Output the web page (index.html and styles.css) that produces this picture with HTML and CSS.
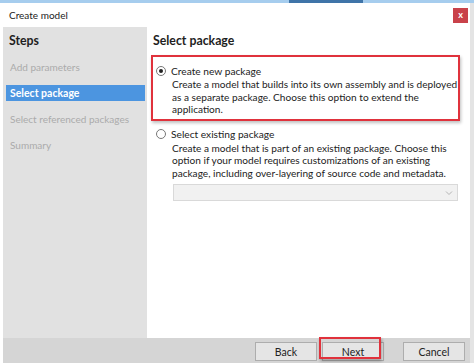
FILE: index.html
```html
<!DOCTYPE html>
<html lang="en">
<head>
  <meta charset="UTF-8">
  <title>Create model</title>
  <link rel="stylesheet" href="styles.css">
</head>
<body>
  <div class="window">
    <div class="topstrip"><span class="seg"></span></div>
    <div class="titlebar">
      <span class="title">Create model</span>
      <span class="close">x</span>
    </div>
    <div class="content">
      <div class="sidebar">
        <h2>Steps</h2>
        <ul class="steps">
          <li>Add parameters</li>
          <li class="active">Select package</li>
          <li>Select referenced packages</li>
          <li>Summary</li>
        </ul>
      </div>
      <div class="main">
        <h2>Select package</h2>
        <div class="option marked">
          <div class="label"><span class="radio checked"></span>Create new package</div>
          <p>Create a model that builds into its own assembly and is deployed<br>as a separate package. Choose this option to extend the<br>application.</p>
        </div>
        <div class="option">
          <div class="label"><span class="radio"></span>Select existing package</div>
          <p>Create a model that is part of an existing package. Choose this<br>option if your model requires customizations of an existing<br>package, including over-layering of source code and metadata.</p>
          <div class="select">
            <svg width="8" height="6" viewBox="0 0 8 6"><path d="M1 1.5 L4 4.5 L7 1.5" fill="none" stroke="#b5b5b5" stroke-width="1"/></svg>
          </div>
        </div>
      </div>
    </div>
    <div class="footer">
      <button>Back</button>
      <button class="next">Next</button>
      <button class="cancel">Cancel</button>
    </div>
  </div>
</body>
</html>
```

FILE: styles.css
```css
body {
  margin: 0;
  padding: 0;
  background: #fff;
  font-family: 'Lato', 'Open Sans', sans-serif;
  color: #222;
}

.window {
  width: 474px;
  height: 363px;
  display: flex;
  flex-direction: column;
  overflow: hidden;
}

.topstrip {
  height: 3px;
  background: #a6cdee;
  display: flex;
}

.topstrip .seg {
  margin-left: 289px;
  width: 74px;
  background: #3f74a8;
}

.titlebar {
  height: 24px;
  display: flex;
  align-items: center;
  justify-content: space-between;
  padding: 0 2px 0 9px;
  border-right: 4px solid #e4e4e4;
}

.title {
  font-size: 10px;
  color: #222;
}

.close {
  width: 15px;
  height: 15px;
  background: #c9424a;
  color: #fff;
  font-size: 9px;
  font-weight: bold;
  line-height: 14px;
  text-align: center;
}

.content {
  flex: 1;
  display: flex;
  margin-left: 3px;
  border-right: 4px solid #e4e4e4;
  min-height: 0;
}

.sidebar {
  flex: 0 0 144px;
  background: #e1e1e1;
  padding: 5px 2px 0 3px;
  box-sizing: border-box;
}

h2 {
  margin: 0;
  font-size: 12.3px;
  font-weight: bold;
  color: #1e1e1e;
  height: 17px;
  line-height: 17px;
}

.sidebar h2 {
  padding-left: 3px;
}

.steps {
  list-style: none;
  margin: 10px 0 0 0;
  padding: 0;
}

.steps li {
  font-size: 10px;
  color: #ababab;
  height: 16px;
  line-height: 16px;
  padding-left: 4px;
  margin-bottom: 10px;
  white-space: nowrap;
}

.steps li.active {
  background: #4c95e0;
  color: #fff;
  font-size: 10.5px;
  font-weight: bold;
}

.main {
  flex: 1;
  min-width: 0;
  background: #fff;
  padding: 5px 10px 0 3px;
}

.main h2 {
  padding-left: 3px;
}

.option {
  margin-left: 1px;
  padding: 6px 0 4px 5px;
}

.option.marked {
  margin-top: 6px;
  border: 2px solid #e0323c;
  box-shadow: 1px 2px 3px rgba(0, 0, 0, 0.25);
  padding: 6px 0 3px 3px;
}

.label {
  display: flex;
  align-items: center;
  font-size: 10.2px;
  height: 15px;
  color: #222;
}

.radio {
  width: 10px;
  height: 10px;
  border: 1px solid #777;
  border-radius: 50%;
  margin-right: 5px;
  box-sizing: border-box;
  display: flex;
  align-items: center;
  justify-content: center;
}

.radio.checked::after {
  content: "";
  width: 4px;
  height: 4px;
  border-radius: 50%;
  background: #222;
}

.option p {
  margin: 0 0 0 16px;
  font-size: 10.1px;
  line-height: 12.5px;
  color: #222;
  white-space: nowrap;
}

.select {
  margin: 5px 0 0 17px;
  height: 15px;
  width: 279px;
  border: 1px solid #d9d9d9;
  background: #f1f1f1;
  display: flex;
  align-items: center;
  justify-content: flex-end;
  padding-right: 4px;
  box-sizing: content-box;
}

.footer {
  height: 25px;
  margin-left: 3px;
  background: #d5d5d5;
  border-right: 4px solid #e4e4e4;
  display: flex;
  align-items: center;
  padding-left: 252px;
  position: relative;
}

.footer button {
  width: 62px;
  height: 19px;
  margin-top: 2px;
  border: 1px solid #adadad;
  background: #e5e5e5;
  font-family: inherit;
  font-size: 10.5px;
  color: #222;
  padding: 0;
  margin-right: 5px;
}

.footer button.next {
  position: relative;
}

.footer button.next::after {
  content: "";
  position: absolute;
  left: -4px;
  top: -6px;
  width: 58px;
  height: 18px;
  border: 2px solid #e0323c;
  box-shadow: 1px 2px 3px rgba(0, 0, 0, 0.3);
}

.footer button.cancel {
  margin-left: 14px;
}
```
